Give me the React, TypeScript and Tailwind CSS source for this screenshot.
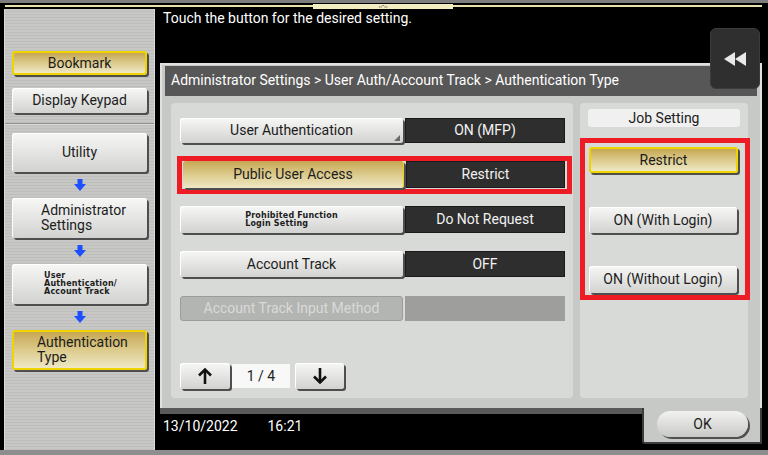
import type { ReactNode } from 'react';

const grayBtn =
  'flex items-center justify-center rounded-[3px] bg-linear-to-b from-[#f7f7f6] to-[#d2d3d0] text-[#1c1c1c] shadow-[inset_1px_1px_0_#ffffff,2px_2px_0_#4e4e4e]';
const goldBtn =
  'flex items-center justify-center rounded-[3px] bg-linear-to-b from-[#c6a752] via-[#dccb8c] to-[#efe8c6] text-[#1c1c1c] shadow-[2px_2px_0_#4e4e4e]';
const tiny = "font-['DejaVu_Sans',sans-serif] text-[8px] font-bold leading-[8px] tracking-[0.2px]";

function BlueArrow() {
  return (
    <div className="flex h-[26px] items-center justify-center">
      <svg width="12" height="12" viewBox="0 0 12 12">
        <polygon points="3.5,0 8.5,0 8.5,5 12,5 6,12 0,5 3.5,5" fill="#1d4fff" />
      </svg>
    </div>
  );
}

function Sidebar() {
  return (
    <div className="ml-[4px] flex w-[151px] flex-col border-x border-[#dadad8] bg-[repeating-linear-gradient(180deg,#c7c8c5_0px,#c7c8c5_2px,#bebfbc_2px,#bebfbc_3px)]">
      <div className="flex h-[114px] flex-col px-[7px] pt-[42px]">
        <div className={`${goldBtn} h-[24px] border-2 border-[#f0d400] text-[14px]`}>Bookmark</div>
        <div className={`${grayBtn} mt-[13px] h-[25px] text-[14px]`}>Display Keypad</div>
      </div>
      <div className="h-[2px] border-t border-[#8f908d] bg-[#dcdcda]" />
      <div className="flex flex-col px-[7px] pt-[8px]">
        <div className={`${grayBtn} h-[39px] text-[14px]`}>Utility</div>
        <BlueArrow />
        <div className={`${grayBtn} h-[40px] !justify-start pl-[29px] text-[14px] leading-[15px]`}>
          Administrator
          <br />
          Settings
        </div>
        <BlueArrow />
        <div className={`${grayBtn} h-[40px] !justify-start pl-[32px] ${tiny}`}>
          <span className="block">
            User
            <br />
            Authentication/
            <br />
            Account Track
          </span>
        </div>
        <BlueArrow />
        <div className={`${goldBtn} h-[40px] !justify-start border-2 border-[#f0d400] pl-[23px] text-[14px] leading-[15px]`}>
          Authentication
          <br />
          Type
        </div>
      </div>
    </div>
  );
}

function Value({ children, className = '' }: { children?: ReactNode; className?: string }) {
  return (
    <div
      className={`flex h-full items-center justify-center border border-[#1a1a1a] bg-[#2e2e2e] text-[14px] text-[#f2f2f2] ${className}`}
    >
      {children}
    </div>
  );
}

function PageArrow({ up }: { up?: boolean }) {
  return (
    <svg width="16" height="18" viewBox="0 0 16 18">
      <g fill="none" stroke="#111" strokeWidth="2.6" transform={up ? undefined : 'rotate(180 8 9)'}>
        <line x1="8" y1="17" x2="8" y2="2.5" />
        <polyline points="2,8.5 8,2.5 14,8.5" />
      </g>
    </svg>
  );
}

function LeftPanel() {
  return (
    <div className="flex w-[402px] flex-col rounded-[4px] bg-[#d7dad7]">
      <div className="ml-[9px] mt-[15px] flex h-[25px] gap-[2px]">
        <div className={`${grayBtn} relative w-[223px] text-[14px]`}>
          User Authentication
          <svg className="absolute bottom-[2px] right-[3px]" width="6" height="6" viewBox="0 0 6 6">
            <polygon points="6,0 6,6 0,6" fill="#6b6b6b" />
          </svg>
        </div>
        <Value className="w-[160px]">ON (MFP)</Value>
      </div>

      <div className="ml-[6px] mt-[13px] flex h-[38px] w-[395px] gap-[2px] border-[5px] border-[#ee1c25] pl-[1px]">
        <div className={`${goldBtn} h-[27px] w-[221px] border-r border-[#f0d400] text-[14px]`}>Public User Access</div>
        <Value className="!h-[27px] w-[159px]">Restrict</Value>
      </div>

      <div className="ml-[9px] mt-[12px] flex h-[27px] gap-[2px]">
        <div className={`${grayBtn} w-[223px] ${tiny}`}>
          <span className="block">
            Prohibited Function
            <br />
            Login Setting
          </span>
        </div>
        <Value className="w-[160px]">Do Not Request</Value>
      </div>

      <div className="ml-[9px] mt-[18px] flex h-[26px] gap-[2px]">
        <div className={`${grayBtn} w-[223px] text-[14px]`}>Account Track</div>
        <Value className="w-[160px]">OFF</Value>
      </div>

      <div className="ml-[9px] mt-[19px] flex h-[25px] gap-[2px]">
        <div className="flex w-[223px] items-center justify-center rounded-[3px] border border-[#9c9d9a] bg-[#b3b5b2] text-[14px] text-[#d9dad8]">
          Account Track Input Method
        </div>
        <div className="h-full w-[160px] bg-[#9e9f9c]" />
      </div>

      <div className="ml-[9px] mt-[42px] flex h-[26px] items-center">
        <div className={`${grayBtn} h-[26px] w-[50px]`}>
          <PageArrow up />
        </div>
        <div className="ml-[2px] flex h-[24px] w-[58px] items-center justify-center bg-[#f8f8f8] text-[14px] text-[#222]">
          1 / 4
        </div>
        <div className={`${grayBtn} ml-[5px] h-[26px] w-[49px]`}>
          <PageArrow />
        </div>
      </div>
    </div>
  );
}

function RightPanel() {
  return (
    <div className="flex w-[168px] flex-col rounded-[4px] bg-[#d7dad7]">
      <div className="ml-[8px] mt-[6px] flex h-[18px] w-[152px] items-center justify-center rounded-[3px] bg-[#eff0ef] text-[14px] leading-[16px] text-[#1c1c1c]">
        Job Setting
      </div>
      <div className="mt-[11px] flex h-[162px] w-[170px] flex-col border-[5px] border-[#ee1c25] px-[4px] pt-[4px]">
        <div className={`${goldBtn} h-[26px] w-[149px] border-2 border-[#f0d400] text-[14px]`}>Restrict</div>
        <div className={`${grayBtn} mt-[34px] h-[26px] w-[148px] text-[14px]`}>ON (With Login)</div>
        <div className={`${grayBtn} mt-[33px] h-[27px] w-[148px] text-[14px]`}>ON (Without Login)</div>
      </div>
    </div>
  );
}

function Main() {
  return (
    <div className="ml-[5px] flex w-[602px] flex-col">
      <div className="h-[54px] pl-[3px] pt-[1px] text-[14px] leading-[16px] text-white">
        Touch the button for the desired setting.
      </div>
      <div className="flex h-[345px] flex-col border-x-2 border-t-2 border-x-[#e1e2e0] border-t-[#e1e2e0] bg-[#c7c9c6] px-[3px] pt-[1px]">
        <div className="flex h-[30px] items-center bg-[#575757] pb-[2px] pl-[6px] text-[14px] text-white">
          Administrator Settings &gt; User Auth/Account Track &gt; Authentication Type
        </div>
        <div className="box-content flex h-[295px] gap-[7px] pl-[6px] pt-[7px]">
          <LeftPanel />
          <RightPanel />
        </div>
      </div>
      <div className="flex h-[42px]">
        <div className="w-[482px] border-t-[6px] border-[#5a5a5a] pl-[3px] pt-[2px] text-[14px] text-white">
          <span>13/10/2022</span>
          <span className="ml-[30px]">16:21</span>
        </div>
        <div className="flex h-[36px] flex-1 items-start justify-end rounded-bl-[3px] border-b-2 border-l-2 border-r-2 border-[#3c3c3c] bg-[#c7c9c6] pr-[12px] pt-[3px]">
          <div className="flex h-[26px] w-[91px] items-center justify-center rounded-full bg-linear-to-b from-[#f2f2f1] to-[#c9cac7] text-[14px] text-[#1c1c1c] shadow-[2px_2px_0_#505050]">
            OK
          </div>
        </div>
      </div>
    </div>
  );
}

export default function App() {
  return (
    <div className="relative flex h-[455px] w-[768px] flex-col overflow-hidden bg-black font-['Roboto','Liberation_Sans',sans-serif] text-[14px]">
      <div className="h-[3px] bg-[#7e7e7e]" />
      <div className="flex h-[6px] items-center pl-[5px] pr-[6px]">
        <div className="h-[2px] w-[308px] bg-[#e9e2ae]" />
        <div className="flex h-[5px] w-[140px] items-center justify-center bg-[#f3eec2] text-[6px] leading-none text-[#333]">
          ‹‹•››
        </div>
        <div className="h-[2px] flex-1 bg-[#e9e2ae]" />
      </div>
      <div className="flex min-h-0 flex-1">
        <Sidebar />
        <Main />
      </div>
      <div className="h-[5px] bg-[#8e8e8e]" />

      <div className="absolute left-[710px] top-[28px] flex h-[61px] w-[50px] items-center justify-center rounded-[6px] border border-[#3c3c3c] bg-[#2f2f2f]">
        <svg width="22" height="14" viewBox="0 0 22 14">
          <polygon points="11,0 11,14 0,7" fill="#e9e9e9" />
          <polygon points="22,0 22,14 11,7" fill="#e9e9e9" />
        </svg>
      </div>
    </div>
  );
}
